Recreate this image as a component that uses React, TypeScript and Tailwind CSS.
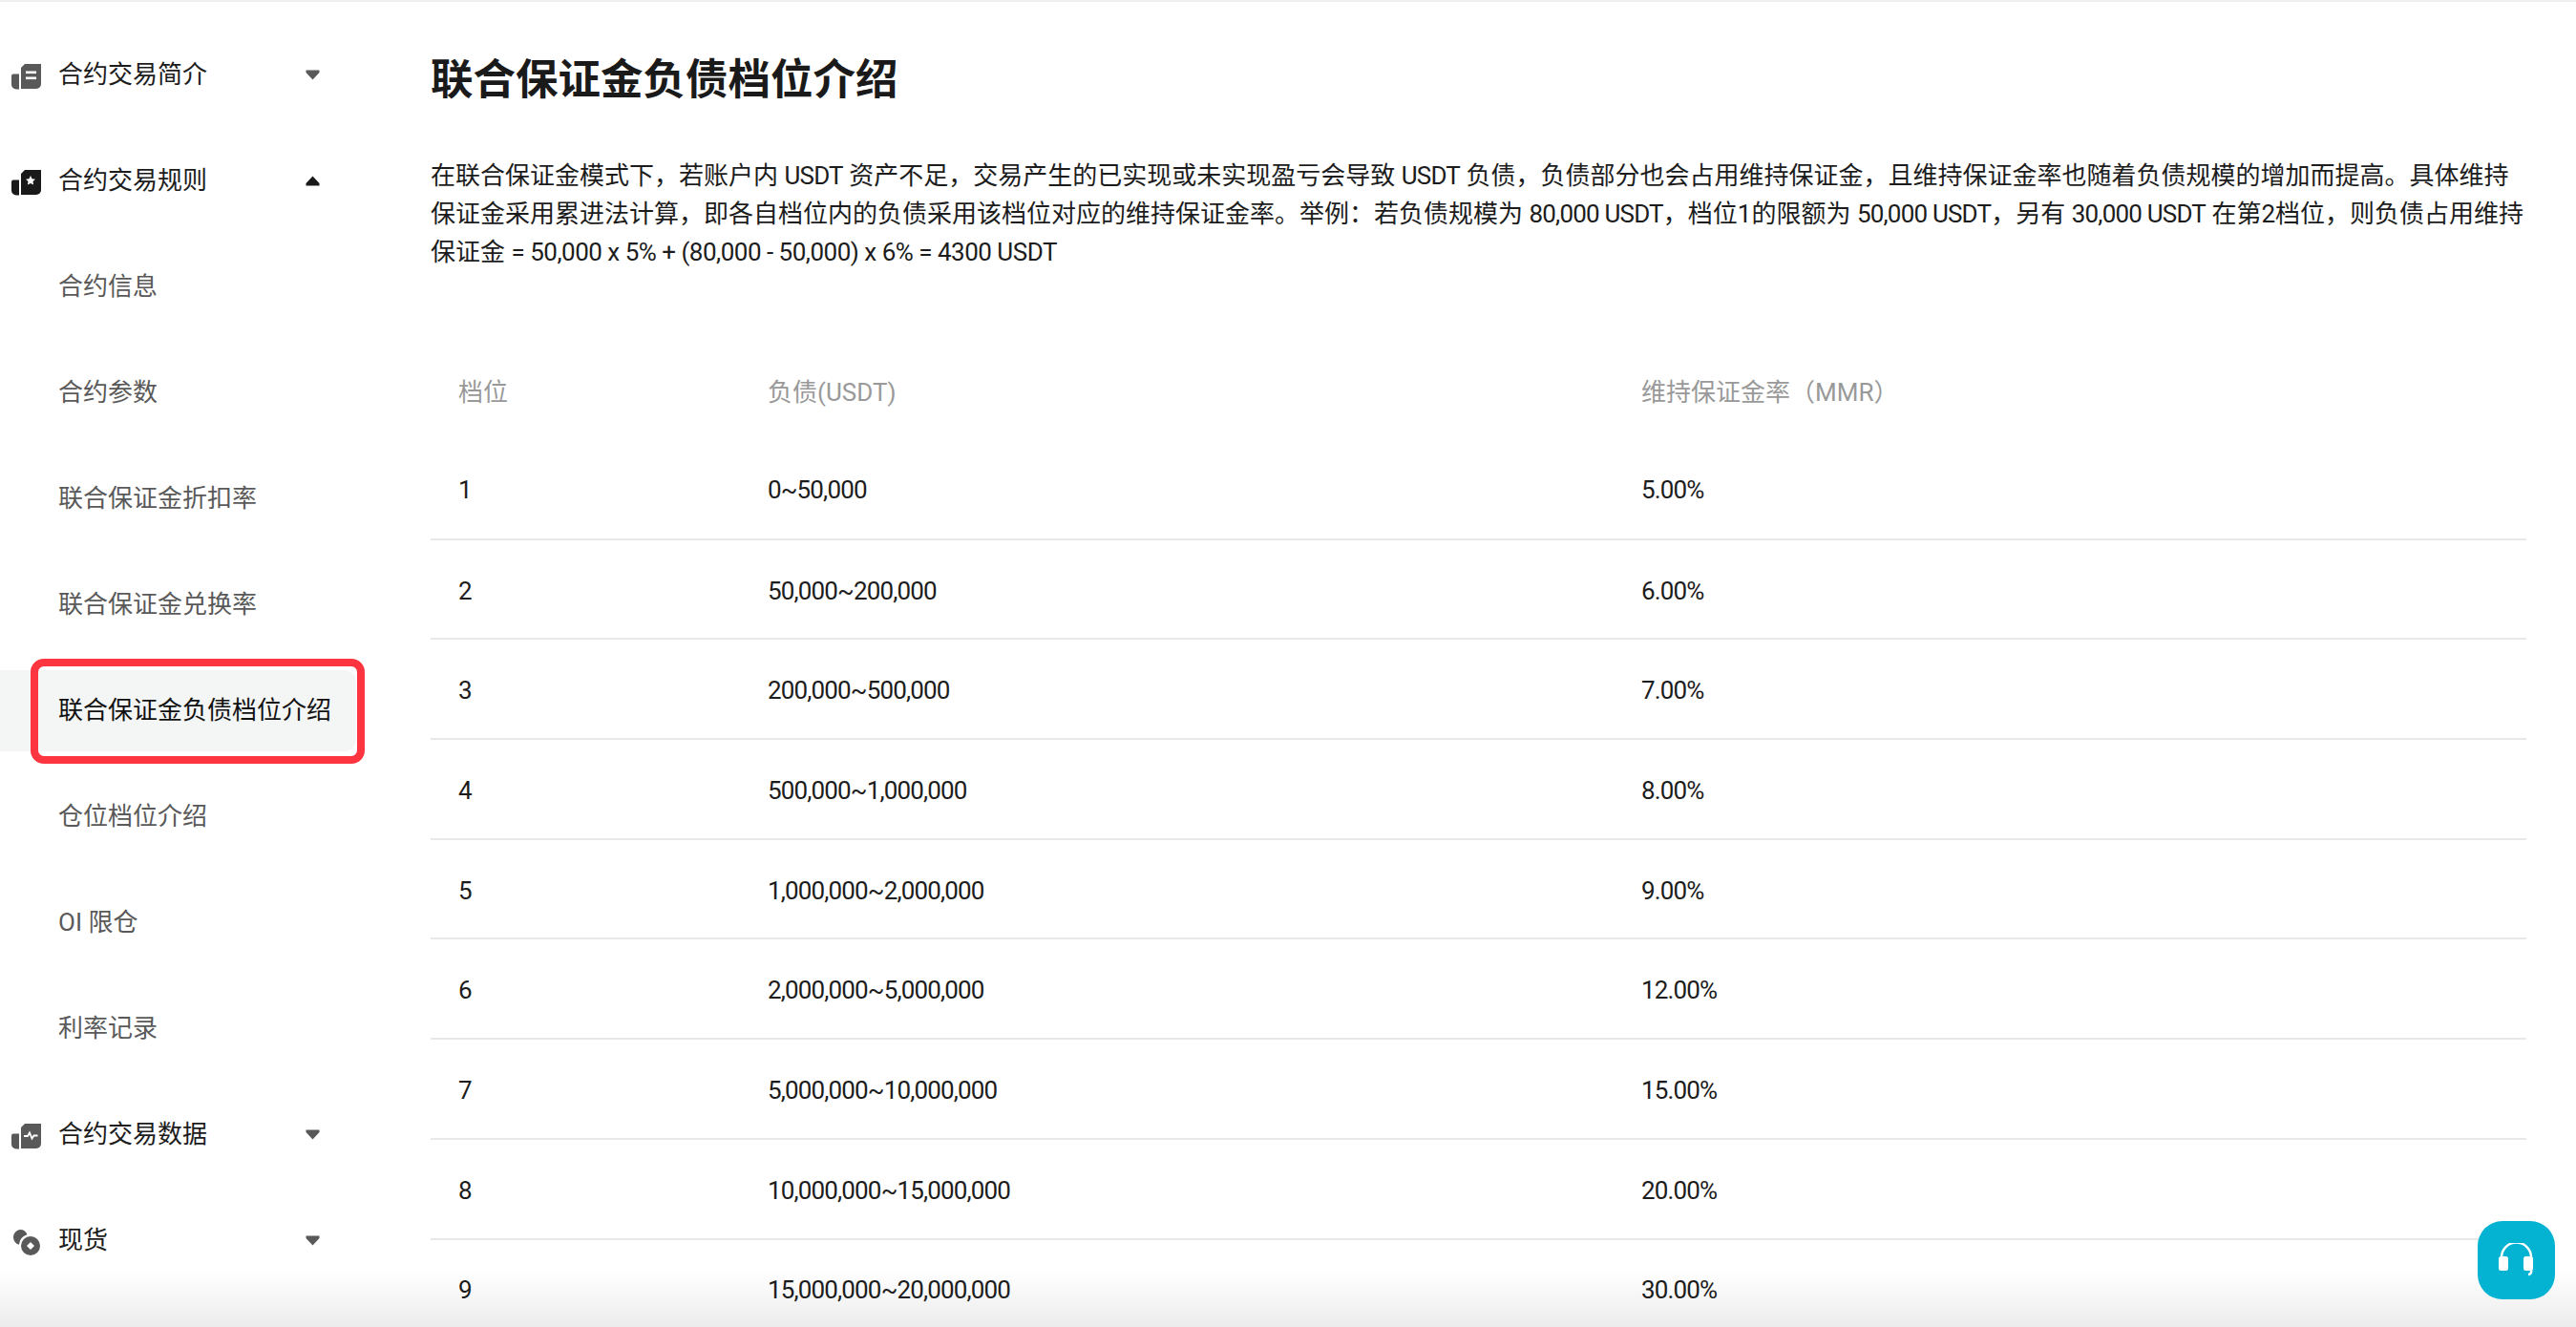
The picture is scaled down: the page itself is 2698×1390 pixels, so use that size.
const fontStack = "font-['Roboto','Noto_Sans_CJK_SC',sans-serif]";

function IconBase({ children }: { children: React.ReactNode }) {
  return (
    <svg width="31" height="27" viewBox="0 0 31 27" fill="currentColor" className="mt-[3px] shrink-0">
      <path d="M0 12.5a2 2 0 0 1 2-2h6v16H5a5 5 0 0 1-5-5z" />
      <path d="M14 0h17v21a5 5 0 0 1-5 5H10V4z" />
      {children}
    </svg>
  );
}

function BookIcon() {
  return (
    <IconBase>
      <rect x="15" y="7.500" width="11" height="2.600" fill="#fff" />
      <rect x="15" y="13.500" width="11" height="2.600" fill="#fff" />
    </IconBase>
  );
}

function StarIcon() {
  return (
    <IconBase>
      <path d="M20 6l1.500 3.200 3.500.5-2.500 2.400.6 3.400-3.100-1.600-3.100 1.600.6-3.400-2.500-2.400 3.500-.5z" fill="#fff" />
    </IconBase>
  );
}

function PulseIcon() {
  return (
    <IconBase>
      <path d="M13 13h4l2-3.500 2.500 6 2-3h4" fill="none" stroke="#fff" strokeWidth="1.800" />
    </IconBase>
  );
}

function CoinIcon() {
  return (
    <svg width="31" height="29" viewBox="0 0 31 29" fill="currentColor" className="mt-[3px] shrink-0">
      <path d="M9 1a8 8 0 0 1 7.500 5.200a12 12 0 0 0-8.500 10.500A8 8 0 0 1 9 1z" />
      <circle cx="20" cy="18" r="10" />
      <path d="M20 14l4 4-4 4-4-4z" fill="#fff" />
    </svg>
  );
}

function Caret({ up, active }: { up?: boolean; active?: boolean }) {
  return (
    <svg
      width="15"
      height="11"
      viewBox="0 0 15 11"
      className={`ml-auto mr-[38px] shrink-0 ${active ? "text-[#1a1a1a]" : "text-[#595959]"}`}
      fill="currentColor"
    >
      {up ? <path d="M7.500 0.500L14.500 8v2.500H0.500V8z" /> : <path d="M0.500 0.500h14V3L7.500 10.500L0.500 3z" />}
    </svg>
  );
}

function NavGroup({ icon, label, up, active }: { icon: React.ReactNode; label: string; up?: boolean; active?: boolean }) {
  return (
    <div className="flex h-[85px] items-center pl-[12px] text-[#1c1c1c]">
      <span className={`flex w-[49px] ${active ? "text-[#1a1a1a]" : "text-[#595959]"}`}>{icon}</span>
      <span>{label}</span>
      <Caret up={up} active={active} />
    </div>
  );
}

function NavItem({ label, selected }: { label: string; selected?: boolean }) {
  return (
    <div
      className={`flex h-[85px] items-center pl-[61px] ${
        selected ? "rounded-r-[12px] bg-[#f4f5f5] text-[#111111]" : "text-[#595959]"
      }`}
    >
      {label}
    </div>
  );
}

// Latin runs in the reference are narrower than Roboto
function Latin({ children }: { children: React.ReactNode }) {
  return <span className="tracking-[-0.8px]">{children}</span>;
}

const subItems = ["合约信息", "合约参数", "联合保证金折扣率", "联合保证金兑换率"];
const subItemsAfter = ["仓位档位介绍", "OI 限仓", "利率记录"];

const tiers = [
  ["1", "0~50,000", "5.00%"],
  ["2", "50,000~200,000", "6.00%"],
  ["3", "200,000~500,000", "7.00%"],
  ["4", "500,000~1,000,000", "8.00%"],
  ["5", "1,000,000~2,000,000", "9.00%"],
  ["6", "2,000,000~5,000,000", "12.00%"],
  ["7", "5,000,000~10,000,000", "15.00%"],
  ["8", "10,000,000~15,000,000", "20.00%"],
  ["9", "15,000,000~20,000,000", "30.00%"],
];

export default function App() {
  return (
    <div className={`relative flex h-screen overflow-hidden bg-white text-[26px] ${fontStack}`}>
      {/* page edges fading out, sits under the content */}
      <div className="pointer-events-none absolute inset-x-0 top-0 h-[2px] bg-[#f0f0f0]" />
      <div className="pointer-events-none absolute inset-x-0 bottom-0 h-[60px] bg-gradient-to-b from-transparent to-[#ececec]" />

      <aside className="relative w-[373px] shrink-0 pt-[36px]">
        <div className="flex flex-col gap-[26px]">
          <NavGroup icon={<BookIcon />} label="合约交易简介" />
          <NavGroup icon={<StarIcon />} label="合约交易规则" up active />
          {subItems.map((s) => (
            <NavItem key={s} label={s} />
          ))}
          <NavItem label="联合保证金负债档位介绍" selected />
          {subItemsAfter.map((s) => (
            <NavItem key={s} label={s} />
          ))}
          <NavGroup icon={<PulseIcon />} label="合约交易数据" />
          <NavGroup icon={<CoinIcon />} label="现货" />
        </div>
        {/* red annotation box drawn over the selected item */}
        <div className="absolute left-[32px] top-[690px] h-[110px] w-[350px] rounded-[14px] border-[8px] border-[#fd3540]" />
      </aside>

      <main className="relative min-w-0 flex-1 pl-[78px] pr-[52px] pt-[53px]">
        <h1 className="text-[44.5px] font-bold leading-[62px] text-[#1a1a1a]">联合保证金负债档位介绍</h1>
        <div className="mt-[49px] whitespace-nowrap text-[26px] leading-[40px] text-[#1c1c1c]">
          <p>
            在联合保证金模式下，若账户内 <Latin>USDT</Latin> 资产不足，交易产生的已实现或未实现盈亏会导致 <Latin>USDT</Latin> 负债，负债部分也会占用维持保证金，且维持保证金率也随着负债规模的增加而提高。具体维持
          </p>
          <p>
            保证金采用累进法计算，即各自档位内的负债采用该档位对应的维持保证金率。举例：若负债规模为 <Latin>80,000 USDT</Latin>，档位1的限额为 <Latin>50,000 USDT</Latin>，另有 <Latin>30,000 USDT</Latin> 在第2档位，则负债占用维持
          </p>
          <p>
            保证金 <span className="tracking-[-0.5px]">= 50,000 x 5% + (80,000 - 50,000) x 6% = 4300 USDT</span>
          </p>
        </div>
        <table className="mt-[76px] w-full table-fixed border-collapse">
          <colgroup>
            <col className="w-[324px]" />
            <col className="w-[915px]" />
            <col />
          </colgroup>
          <thead>
            <tr className="h-[100px] text-left text-[#999999]">
              <th className="pl-[29px] pt-[3px] font-normal">档位</th>
              <th className="pl-[29px] pt-[3px] font-normal">负债(USDT)</th>
              <th className="pl-[29px] pt-[3px] font-normal">维持保证金率（MMR）</th>
            </tr>
          </thead>
          <tbody>
            {tiers.map((t) => (
              <tr key={t[0]} className="h-[104.7px] border-b-[2px] border-[#e8e8e8] text-[#1c1c1c]">
                <td className="pl-[29px] pt-[4px] tracking-[-0.85px]">{t[0]}</td>
                <td className="pl-[29px] pt-[4px] tracking-[-0.85px]">{t[1]}</td>
                <td className="pl-[29px] pt-[4px] tracking-[-0.85px]">{t[2]}</td>
              </tr>
            ))}
          </tbody>
        </table>
      </main>

      <button className="absolute left-[2595px] top-[1279px] flex h-[82px] w-[81px] items-center justify-center rounded-[26px] bg-[#04b2d2]">
        <svg width="37" height="36" viewBox="0 0 37 36" fill="none" className="text-white">
          <path d="M3 16V15a15.500 15.500 0 0 1 31 0v14a3 3 0 0 1-3 4" stroke="currentColor" strokeWidth="2.500" />
          <rect x="0" y="14" width="10" height="15" rx="2.500" fill="currentColor" />
          <rect x="26" y="14" width="10" height="15" rx="2.500" fill="currentColor" />
        </svg>
      </button>
    </div>
  );
}
